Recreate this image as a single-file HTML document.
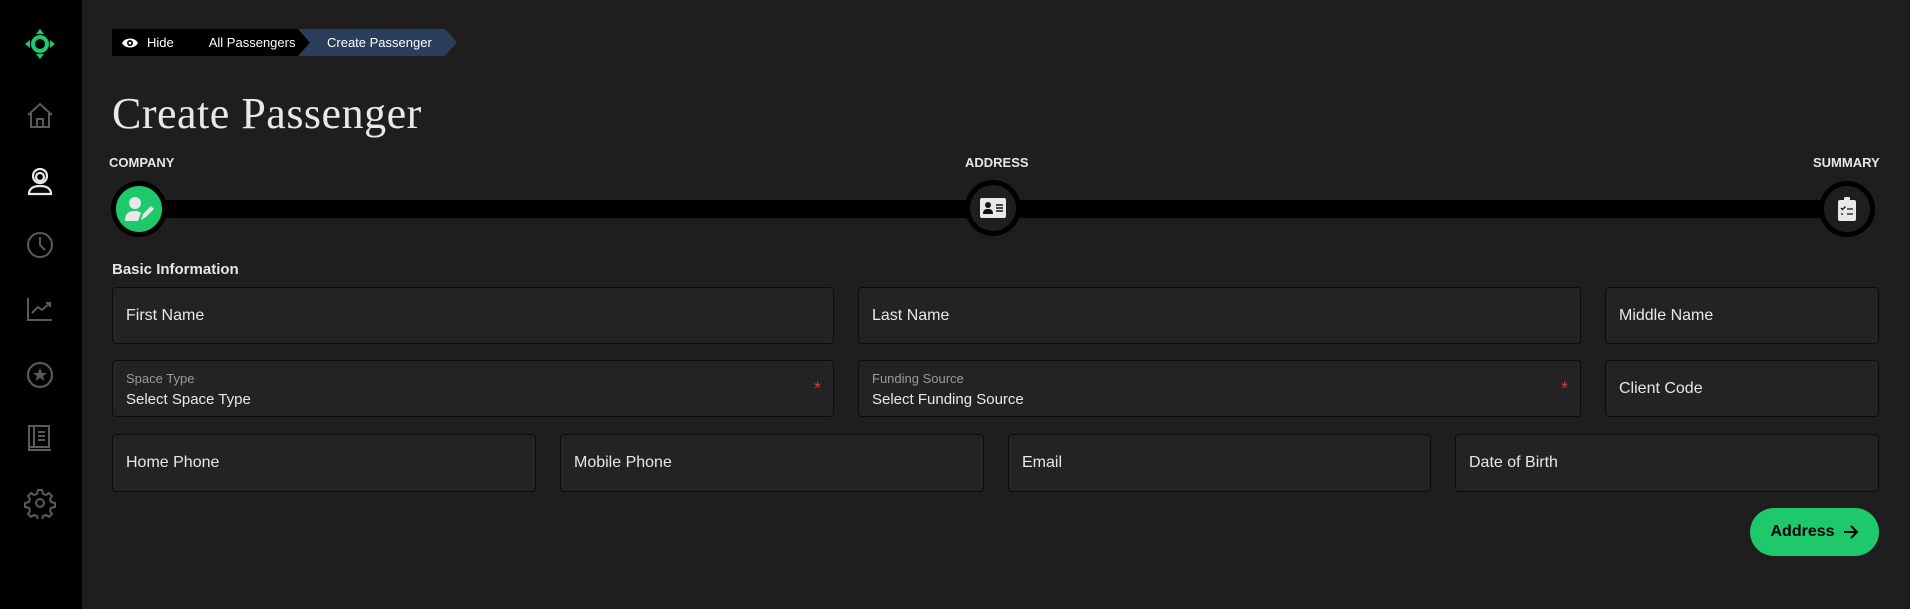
<!DOCTYPE html>
<html><head><style>
*{box-sizing:border-box;margin:0;padding:0}
body{width:1910px;height:609px;background:#1e1e1e;font-family:"Liberation Sans",sans-serif;color:#e6e6e6;position:relative;overflow:hidden}
.side{position:absolute;left:0;top:0;width:82px;height:609px;background:#000}
.ic{position:absolute;left:24px;width:32px;height:32px}
.bc{position:absolute;left:112px;top:29px;height:27px;display:flex;font-size:13px;color:#fff}
.f{position:absolute;background:#232323;border:1px solid #0c0c0c;border-radius:4px;font-size:16px;color:#e8e8e8;padding-left:13px}
.f .t{position:absolute;left:13px;top:50%;transform:translateY(-50%)}
.lbl{position:absolute;font-size:13px;font-weight:bold;color:#e6e6e6}
.circ{position:absolute;width:56px;height:56px;border-radius:50%;border:5px solid #000;background:#1e1e1e;display:flex;align-items:center;justify-content:center}
.ast{position:absolute;right:12px;top:50%;transform:translateY(-50%);color:#d8343f;font-size:18px}
</style></head><body>
<div class="side">
<svg class="ic" style="top:28px" viewBox="0 0 32 32"><polygon points="16,1 20,6 12,6" fill="#1ec96b"/><polygon points="16,31 20,26 12,26" fill="#1ec96b"/><polygon points="1,16 6,12 6,20" fill="#1ec96b"/><polygon points="31,16 26,12 26,20" fill="#1ec96b"/><circle cx="16" cy="16" r="7" fill="none" stroke="#1ec96b" stroke-width="4"/></svg>
<svg class="ic" style="top:100px" viewBox="0 0 32 32" fill="none" stroke="#5a5a5a" stroke-width="2"><path d="M4 15 16 4 28 15M7 13v14h18V13M13 27v-8h6v8"/></svg>
<svg class="ic" style="top:165px" viewBox="0 0 32 32" fill="none" stroke="#e8e8e8" stroke-width="2.2"><circle cx="16" cy="11" r="7"/><circle cx="16" cy="12" r="4"/><path d="M5 29c0-6 5-8 11-8s11 2 11 8z"/></svg>
<svg class="ic" style="top:229px" viewBox="0 0 32 32" fill="none" stroke="#5a5a5a" stroke-width="2"><circle cx="16" cy="16" r="12"/><path d="M16 8v8l5 5"/></svg>
<svg class="ic" style="top:293px" viewBox="0 0 32 32" fill="none" stroke="#5a5a5a" stroke-width="2"><path d="M4 5v22h24M8 20l6-6 4 3 8-7M22 10h4v4"/></svg>
<svg class="ic" style="top:359px" viewBox="0 0 32 32"><circle cx="16" cy="16" r="12" fill="none" stroke="#5a5a5a" stroke-width="2.2"/><polygon points="16,9 18,14 23,14 19,17 20.5,22 16,19 11.5,22 13,17 9,14 14,14" fill="#5a5a5a"/></svg>
<svg class="ic" style="top:422px" viewBox="0 0 32 32" fill="none" stroke="#5a5a5a" stroke-width="2"><path d="M5 4h20v21H5zM5 25v3h22M10 4v21M14 10h7M14 14h7M14 18h7"/></svg>
<svg class="ic" style="top:487px" viewBox="0 0 32 32" fill="none" stroke="#5a5a5a" stroke-width="2"><circle cx="16" cy="16" r="4"/><path d="M14 3h4l1 4 3 1 3-2 3 3-2 3 1 3 4 1v4l-4 1-1 3 2 3-3 3-3-2-3 1-1 4h-4l-1-4-3-1-3 2-3-3 2-3-1-3-4-1v-4l4-1 1-3-2-3 3-3 3 2 3-1z"/></svg>
</div>
<div class="bc">
<div style="background:#000;width:186px;display:flex;align-items:center;padding-left:10px"><svg width="16" height="12" viewBox="0 0 16 12"><path d="M0 6C3 0 13 0 16 6 13 12 3 12 0 6z" fill="#fff"/><circle cx="8" cy="6" r="3" fill="#000"/><circle cx="8" cy="6" r="1.3" fill="#fff"/></svg><span style="margin-left:9px">Hide</span><span style="margin-left:35px">All Passengers</span></div>
<svg width="12" height="27" style="background:#2a3d5a"><polygon points="0,0 12,13.5 0,27" fill="#000"/></svg>
<div style="background:#2a3d5a;display:flex;align-items:center;padding-left:17px;width:135px">Create Passenger</div>
<svg width="12" height="27"><polygon points="0,0 12,13.5 0,27" fill="#2a3d5a"/></svg>
</div>
<div style="position:absolute;left:112px;top:88px;font-family:'Liberation Serif',serif;font-size:44px;color:#e8e8e8;letter-spacing:0.5px">Create Passenger</div>
<div class="lbl" style="left:109px;top:155px">COMPANY</div>
<div class="lbl" style="left:965px;top:155px">ADDRESS</div>
<div class="lbl" style="left:1813px;top:155px">SUMMARY</div>
<div style="position:absolute;left:139px;top:200px;width:1708px;height:18px;background:#000"></div>
<div class="circ" style="left:111px;top:181px;background:#1ec96b"><svg width="30" height="26" viewBox="0 0 30 26"><circle cx="11" cy="7" r="6" fill="#e8e8e8"/><path d="M1 25c0-8 4-10 10-10 3 0 5 1 6 2l-3 8z" fill="#e8e8e8"/><path d="M17 24l2-6 8-8 3 3-8 8z" fill="#e8e8e8"/></svg></div>
<div class="circ" style="left:965px;top:180px"><svg width="26" height="20" viewBox="0 0 26 20"><rect width="26" height="20" rx="2" fill="#e8e8e8"/><circle cx="8" cy="7" r="3" fill="#111"/><path d="M3 16c0-4 2-5 5-5s5 1 5 5z" fill="#111"/><path d="M16 7h7M16 10h7M16 13h7" stroke="#111" stroke-width="1.5"/></svg></div>
<div class="circ" style="left:1819px;top:181px"><svg width="18" height="24" viewBox="0 0 18 24"><rect y="3" width="18" height="21" rx="2" fill="#e8e8e8"/><rect x="6" y="0" width="6" height="5" rx="1.5" fill="#e8e8e8"/><path d="M3 11l1.5 1.5 3-3M3 17h2M9 12h6M9 17h6" stroke="#111" stroke-width="1.3" fill="none"/></svg></div>
<div style="position:absolute;left:112px;top:261px;font-size:15px;font-weight:bold;color:#e6e6e6">Basic Information</div>
<div class="f" style="left:112px;top:287px;width:722px;height:57px"><span class="t">First Name</span></div>
<div class="f" style="left:858px;top:287px;width:723px;height:57px"><span class="t">Last Name</span></div>
<div class="f" style="left:1605px;top:287px;width:274px;height:57px"><span class="t">Middle Name</span></div>
<div class="f" style="left:112px;top:360px;width:722px;height:57px"><div style="position:absolute;left:13px;top:10px;font-size:13px;color:#9a9a9a">Space Type</div><div style="position:absolute;left:13px;top:30px;font-size:15px">Select Space Type</div><span class="ast">*</span></div>
<div class="f" style="left:858px;top:360px;width:723px;height:57px"><div style="position:absolute;left:13px;top:10px;font-size:13px;color:#9a9a9a">Funding Source</div><div style="position:absolute;left:13px;top:30px;font-size:15px">Select Funding Source</div><span class="ast">*</span></div>
<div class="f" style="left:1605px;top:360px;width:274px;height:57px"><span class="t">Client Code</span></div>
<div class="f" style="left:112px;top:434px;width:424px;height:58px"><span class="t">Home Phone</span></div>
<div class="f" style="left:560px;top:434px;width:424px;height:58px"><span class="t">Mobile Phone</span></div>
<div class="f" style="left:1008px;top:434px;width:423px;height:58px"><span class="t">Email</span></div>
<div class="f" style="left:1455px;top:434px;width:424px;height:58px"><span class="t">Date of Birth</span></div>
<div style="position:absolute;left:1750px;top:508px;width:129px;height:48px;border-radius:24px;background:#1ec96b;color:#000;font-size:16px;font-weight:bold;display:flex;align-items:center;justify-content:center">Address <svg width="16" height="14" viewBox="0 0 16 14" style="margin-left:8px"><path d="M1 7h13M8 1l6 6-6 6" stroke="#000" stroke-width="2" fill="none"/></svg></div>
</body></html>
